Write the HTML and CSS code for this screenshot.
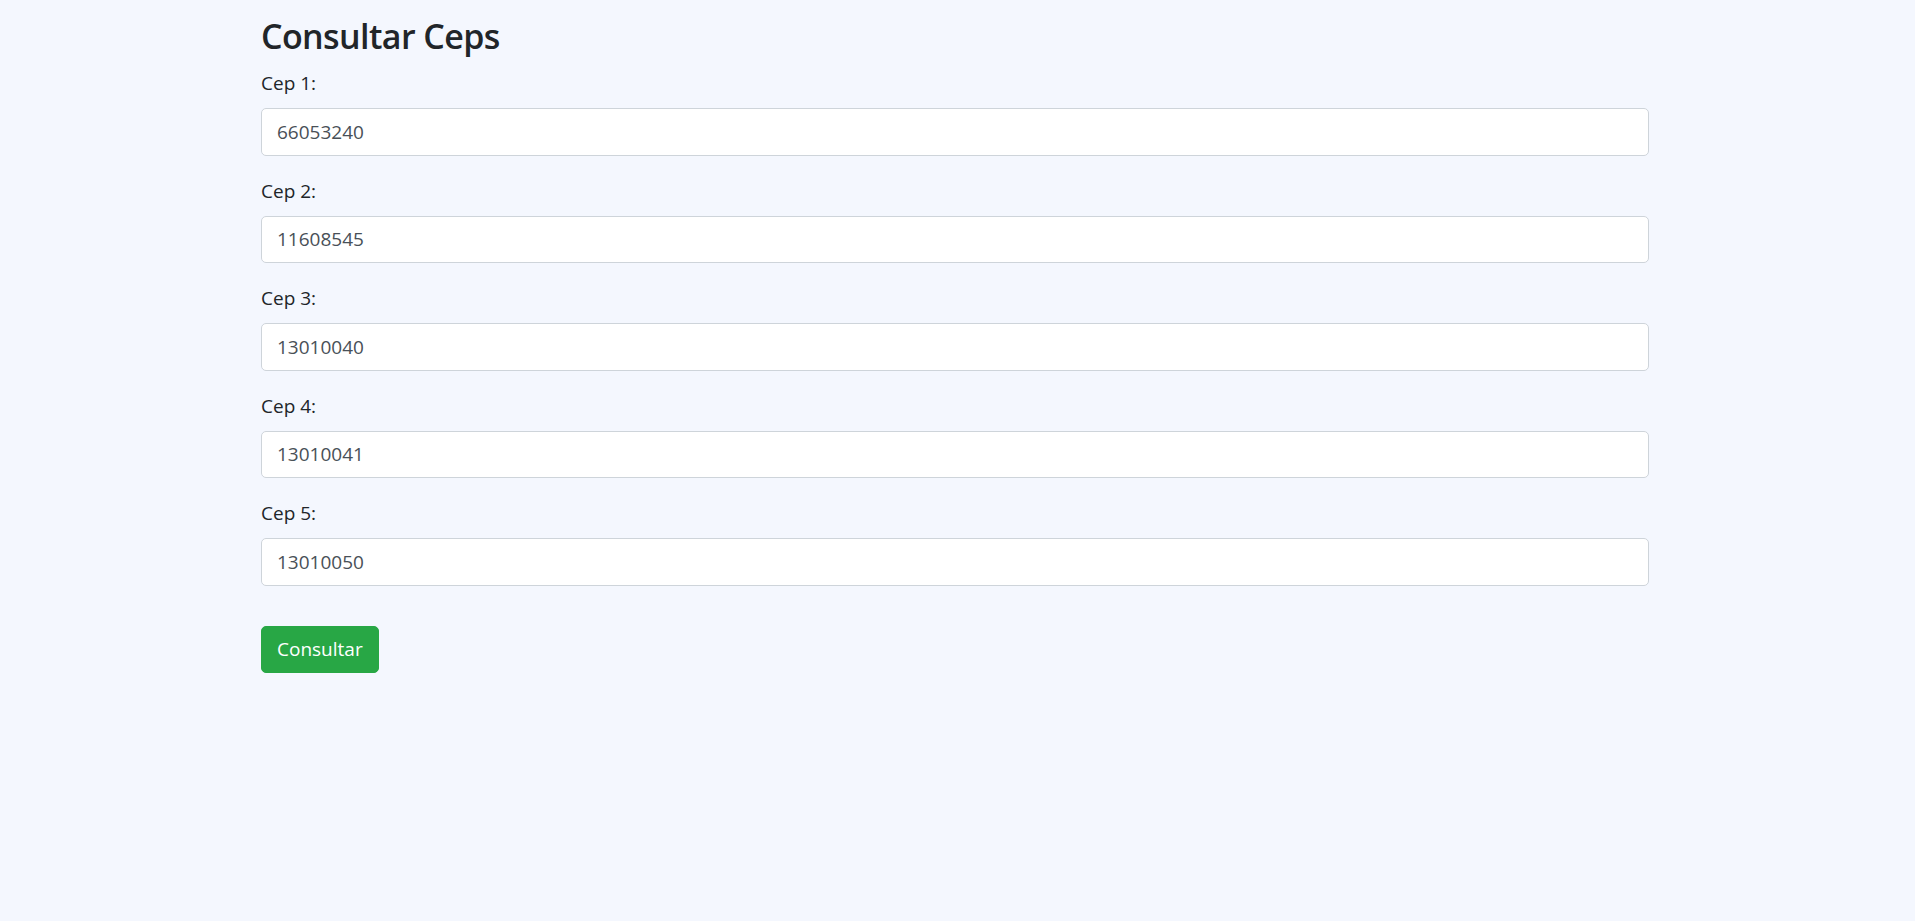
FILE: index.html
```html
<!DOCTYPE html>
<html lang="pt-BR">
<head>
<meta charset="utf-8">
<title>Consultar Ceps</title>
<link rel="stylesheet" href="styles.css">
</head>
<body>
<div class="container">
  <h2 class="title">Consultar Ceps</h2>
  <form class="form">
    <div class="form-group">
      <label class="label" for="cep1">Cep 1:</label>
      <input class="form-control" id="cep1" type="text" value="66053240">
    </div>
    <div class="form-group">
      <label class="label" for="cep2">Cep 2:</label>
      <input class="form-control" id="cep2" type="text" value="11608545">
    </div>
    <div class="form-group">
      <label class="label" for="cep3">Cep 3:</label>
      <input class="form-control" id="cep3" type="text" value="13010040">
    </div>
    <div class="form-group">
      <label class="label" for="cep4">Cep 4:</label>
      <input class="form-control" id="cep4" type="text" value="13010041">
    </div>
    <div class="form-group">
      <label class="label" for="cep5">Cep 5:</label>
      <input class="form-control" id="cep5" type="text" value="13010050">
    </div>
    <div class="actions">
      <button class="btn btn-success" type="button">Consultar</button>
    </div>
  </form>
</div>
</body>
</html>
```
FILE: styles.css
```css
* { box-sizing: border-box; }
html, body { margin: 0; padding: 0; }
body {
  background: #f4f7fe;
  color: #212529;
  font-family: "Open Sans", "Noto Sans", sans-serif;
  font-size: 19px;
  line-height: 30px;
}
.container {
  width: 1388px;
  margin: 10px 0 0 calc(50% - 696.5px);
}
.title {
  margin: 0 0 10px;
  padding-top: 4px;
  font-size: 34px;
  line-height: 44px;
  font-weight: 600;
  letter-spacing: -0.6px;
}
.form { margin: 0; }
.form-group {
  display: flex;
  flex-direction: column;
  margin-bottom: 20px;
}
.label {
  display: block;
  margin-bottom: 10px;
  height: 30px;
}
.form-control {
  display: block;
  width: 100%;
  height: 47.5px;
  padding: 7px 15px;
  font-family: inherit;
  font-size: 19px;
  line-height: 30px;
  color: #495057;
  background: #fff;
  border: 1.25px solid #ced4da;
  border-radius: 5px;
  outline: none;
}
.actions { padding-top: 20px; }
.btn {
  display: inline-block;
  height: 47.5px;
  padding: 7px 15px;
  font-family: inherit;
  font-size: 19px;
  line-height: 30px;
  color: #fff;
  border: 1.25px solid #28a745;
  border-radius: 5px;
  background: #28a745;
  cursor: pointer;
}
```
